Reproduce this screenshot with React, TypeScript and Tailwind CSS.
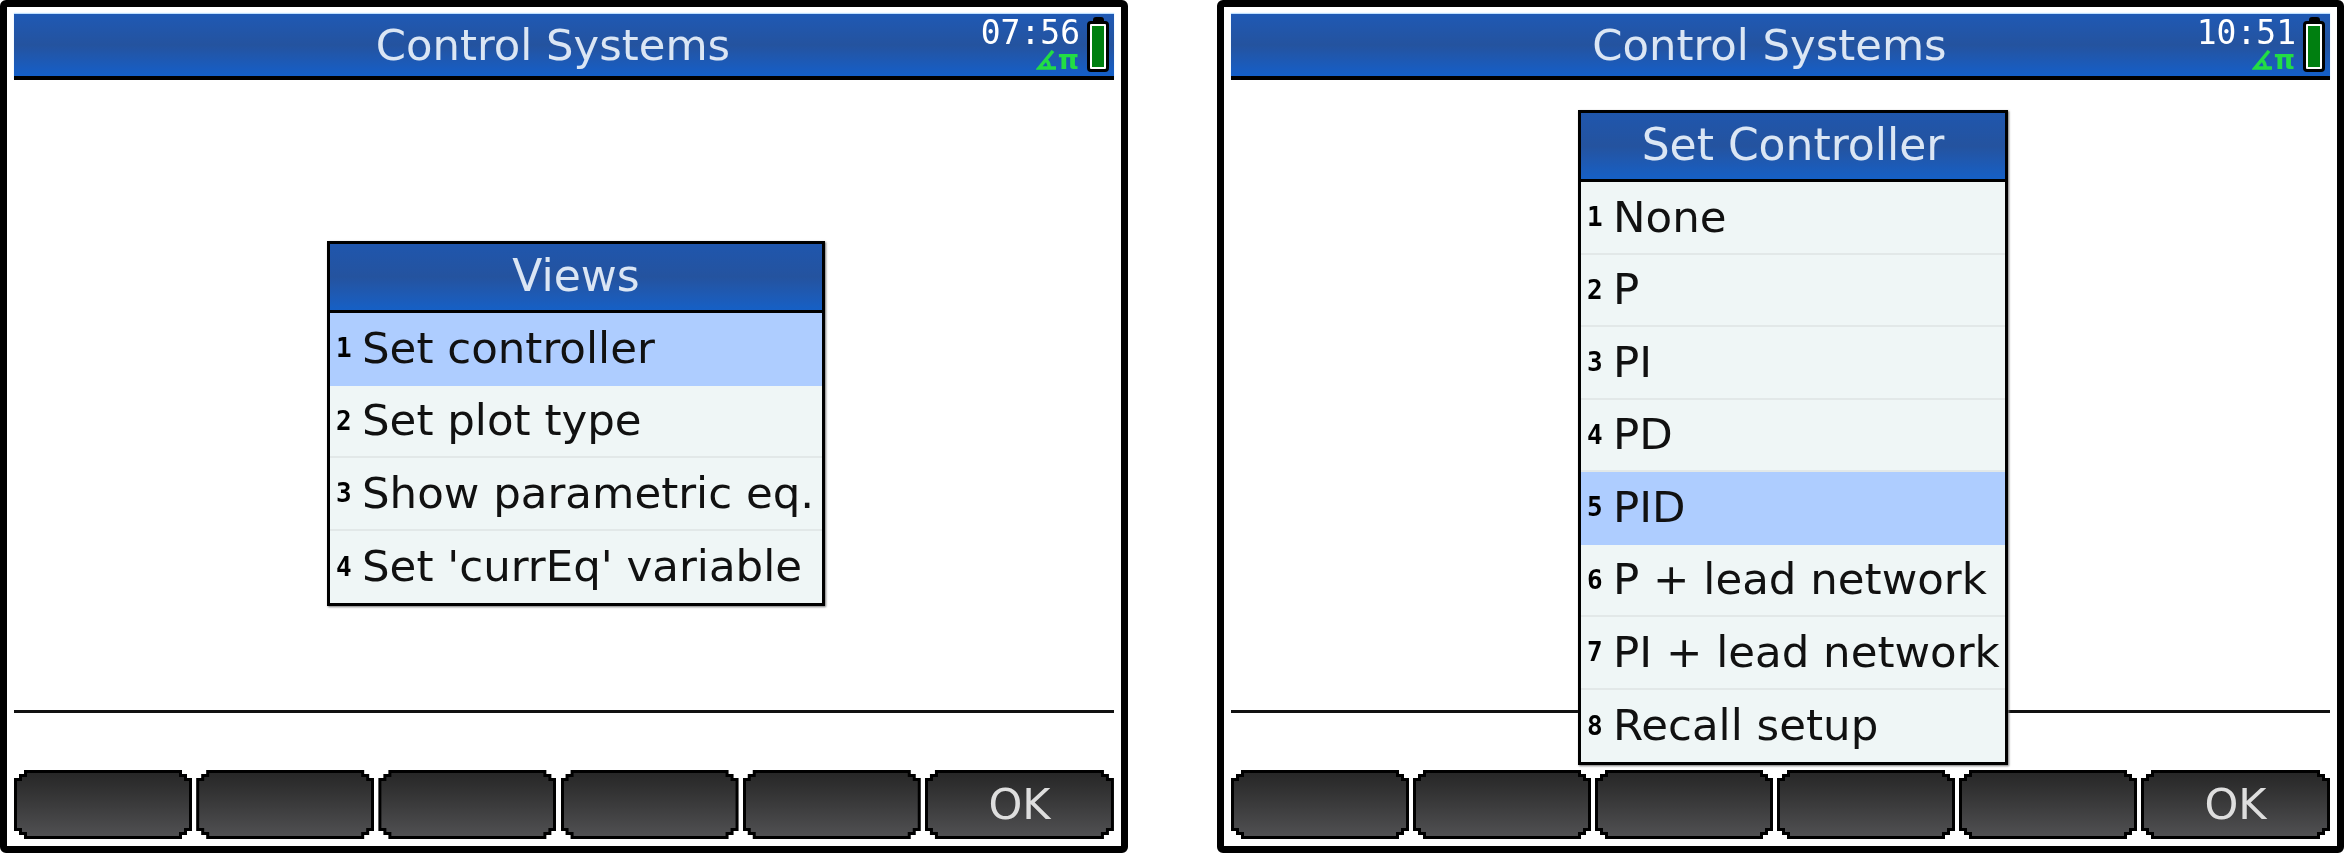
const notchOuter =
  '[clip-path:polygon(10px_0,calc(100%-10px)_0,calc(100%-10px)_4px,calc(100%-5px)_4px,calc(100%-5px)_8px,100%_8px,100%_calc(100%-8px),calc(100%-5px)_calc(100%-8px),calc(100%-5px)_calc(100%-4px),calc(100%-10px)_calc(100%-4px),calc(100%-10px)_100%,10px_100%,10px_calc(100%-4px),5px_calc(100%-4px),5px_calc(100%-8px),0_calc(100%-8px),0_8px,5px_8px,5px_4px,10px_4px)]'

function SoftKey({ label, wide }: { label?: string; wide?: boolean }) {
  return (
    <div className={`h-[69px] bg-black p-[3px] ${wide ? 'w-[189px]' : 'w-[178px]'} ${notchOuter}`}>
      <div className={`flex h-full items-center justify-center bg-gradient-to-b from-[#272727] to-[#505052] text-[43px] text-[#dedede] ${notchOuter}`}>
        {label}
      </div>
    </div>
  )
}

function StatusIcons({ time }: { time: string }) {
  return (
    <div className="absolute right-[5px] top-[3px] flex items-start gap-[7px]">
      <div className="flex flex-col items-end">
        <span className="font-['DejaVu_Sans_Mono',monospace] text-[33px] leading-[32px] text-white">{time}</span>
        <div className="flex h-[22px] items-end gap-[1px] pr-[1px]">
          <svg width="21" height="21" viewBox="0 0 21 21" fill="none" stroke="#22dd44" strokeWidth="3.5">
            <path d="M17 1 L3 18 H20" />
            <path d="M10 10 A9 9 0 0 1 13 18" />
          </svg>
          <span className="font-['DejaVu_Sans',sans-serif] text-[27px] font-bold leading-[22px] text-[#22dd44]">π</span>
        </div>
      </div>
      <div className="flex flex-col items-center">
        <div className="h-[4px] w-[11px] rounded-t-[3px] bg-black" />
        <div className="h-[51px] w-[22px] rounded-[4px] border-[3px] border-black bg-white p-[2px]">
          <div className="h-full w-full bg-[#007f10]" />
        </div>
      </div>
    </div>
  )
}

function Menu({ title, items, active, className }: { title: string; items: string[]; active: number; className: string }) {
  return (
    <div className={`absolute border-[3px] border-black bg-[#eff6f6] shadow-[1px_1px_2px_#777] ${className}`}>
      <div className="flex h-[69px] items-center justify-center border-b-[3px] border-black bg-gradient-to-b from-[#1f56ad] via-[#24539f] to-[#1560c6] pb-[2px] text-[#dbe6f4]">
        <span className="text-[44px] leading-none">{title}</span>
      </div>
      {items.map((item, i) => (
        <div
          key={item}
          className={`flex h-[72.5px] items-center border-b-2 pl-[6px] last:border-b-0 ${i === active ? 'border-[#aecdff] bg-[#aecdff]' : 'border-[#e2e8e8]'}`}
        >
          <span className="w-[26px] font-['DejaVu_Sans_Mono',monospace] text-[26px] font-bold leading-none text-black">{i + 1}</span>
          <span className="whitespace-nowrap text-[43.5px] leading-none text-[#111]">{item}</span>
        </div>
      ))}
    </div>
  )
}

function Screen({ time, width, children }: { time: string; width: string; children: React.ReactNode }) {
  return (
    <div className={`relative flex h-[853px] flex-col rounded-[6px] border-[7px] border-black bg-white px-[7px] pt-[7px] ${width}`}>
      <div className="relative flex h-[66px] shrink-0 items-center justify-center border-b-[4px] border-black bg-gradient-to-b from-[#1f59b4] via-[#24539f] to-[#135fc9] pl-[0px] pr-[22px] pt-[2px] shadow-[0_-1px_1px_#bfe0ff]">
        <span className="text-[43.3px] leading-none text-[#dbe6f4]">Control Systems</span>
        <StatusIcons time={time} />
      </div>
      <div className="flex-1" />
      <div className="h-[3px] bg-[#111]" />
      <div className="mt-[57px] flex justify-between">
        <SoftKey />
        <SoftKey />
        <SoftKey />
        <SoftKey />
        <SoftKey />
        <SoftKey label="OK" wide />
      </div>
      <div className="h-[7px]" />
      {children}
    </div>
  )
}

export default function App() {
  return (
    <div className="flex h-[853px] w-[2344px] justify-between overflow-hidden bg-white font-['DejaVu_Sans',sans-serif] blur-[0.6px]">
      <Screen time="07:56" width="w-[1128px]">
        <Menu
          title="Views"
          active={0}
          className="left-[320px] top-[234px] w-[498px]"
          items={['Set controller', 'Set plot type', 'Show parametric eq.', "Set 'currEq' variable"]}
        />
      </Screen>
      <Screen time="10:51" width="w-[1127px]">
        <Menu
          title="Set Controller"
          active={4}
          className="left-[354px] top-[103px] w-[430px]"
          items={['None', 'P', 'PI', 'PD', 'PID', 'P + lead network', 'PI + lead network', 'Recall setup']}
        />
      </Screen>
    </div>
  )
}
